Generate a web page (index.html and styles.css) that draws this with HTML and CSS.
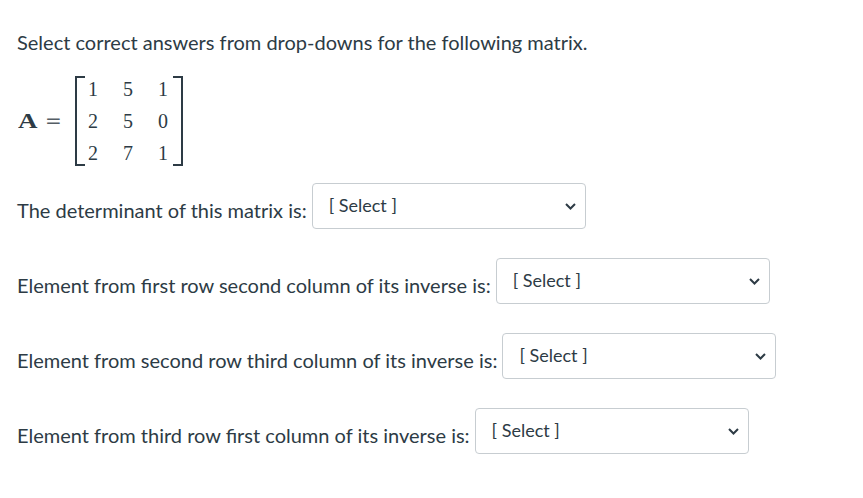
FILE: index.html
```html
<!DOCTYPE html>
<html>
<head>
<meta charset="utf-8">
<link rel="stylesheet" href="styles.css">
</head>
<body>
<div class="page">
  <p class="intro">Select correct answers from drop-downs for the following matrix.</p>
  <div class="equation">
    <span class="var">A</span>
    <span class="eq">=</span>
    <span class="bracket left"></span>
    <div class="grid">
      <span>1</span><span>5</span><span>1</span>
      <span>2</span><span>5</span><span>0</span>
      <span>2</span><span>7</span><span>1</span>
    </div>
    <span class="bracket right"></span>
  </div>

  <div class="row r1">
    <span class="label">The determinant of this matrix is:</span>
    <div class="select"><span class="value">[ Select ]</span><svg class="chev" width="11" height="7" viewBox="0 0 11 7"><polyline points="1,1 5.5,5.5 10,1" fill="none" stroke="#2D3B45" stroke-width="2"/></svg></div>
  </div>
  <div class="row r2">
    <span class="label">Element from first row second column of its inverse is:</span>
    <div class="select"><span class="value">[ Select ]</span><svg class="chev" width="11" height="7" viewBox="0 0 11 7"><polyline points="1,1 5.5,5.5 10,1" fill="none" stroke="#2D3B45" stroke-width="2"/></svg></div>
  </div>
  <div class="row r3">
    <span class="label">Element from second row third column of its inverse is:</span>
    <div class="select"><span class="value">[ Select ]</span><svg class="chev" width="11" height="7" viewBox="0 0 11 7"><polyline points="1,1 5.5,5.5 10,1" fill="none" stroke="#2D3B45" stroke-width="2"/></svg></div>
  </div>
  <div class="row r4">
    <span class="label">Element from third row first column of its inverse is:</span>
    <div class="select"><span class="value">[ Select ]</span><svg class="chev" width="11" height="7" viewBox="0 0 11 7"><polyline points="1,1 5.5,5.5 10,1" fill="none" stroke="#2D3B45" stroke-width="2"/></svg></div>
  </div>
</div>
</body>
</html>
```
FILE: styles.css
```css
html, body {
  margin: 0;
  padding: 0;
  background: #ffffff;
}
.page {
  font-family: Lato, "Open Sans", sans-serif;
  font-size: 20px;
  line-height: 30px;
  color: #2D3B45;
  padding: 27px 0 0 17px;
}
.intro {
  margin: 0;
}
.equation {
  display: flex;
  align-items: center;
  margin-top: 16px;
  font-family: "Liberation Serif", serif;
  font-size: 20px;
  color: #2D3B45;
}
.var {
  font-weight: bold;
  width: 21px;
  margin-left: 1px;
  transform: scaleX(1.35);
  transform-origin: left center;
}
.eq {
  font-family: "DejaVu Serif", serif;
  font-size: 20px;
  width: 17px;
  margin-left: 6px;
  margin-right: 13px;
  text-align: center;
  color: #555e65;
}
.bracket {
  width: 8px;
  height: 86px;
  border-top: 2px solid #2D3B45;
  border-bottom: 2px solid #2D3B45;
}
.bracket.left {
  border-left: 2px solid #2D3B45;
}
.bracket.right {
  border-right: 2px solid #2D3B45;
  margin-left: 2px;
}
.grid {
  display: grid;
  grid-template-columns: 16px 16px 16px;
  column-gap: 19px;
  grid-auto-rows: 32px;
  line-height: 32px;
  justify-items: center;
}
.row {
  display: flex;
  align-items: flex-end;
  height: 46px;
  gap: 5px;
}
.r1 { margin-top: 14px; }
.r2, .r3, .r4 { margin-top: 29px; }
.label {
  padding-bottom: 4px;
}
.select {
  box-sizing: border-box;
  width: 274px;
  height: 46px;
  border: 1px solid #C7CDD1;
  border-radius: 4px;
  display: flex;
  align-items: center;
  justify-content: space-between;
  padding: 0 9px 0 16px;
  font-size: 18px;
  line-height: 27px;
}
.value {
  padding-bottom: 1px;
}
.chev {
  display: block;
}
```
